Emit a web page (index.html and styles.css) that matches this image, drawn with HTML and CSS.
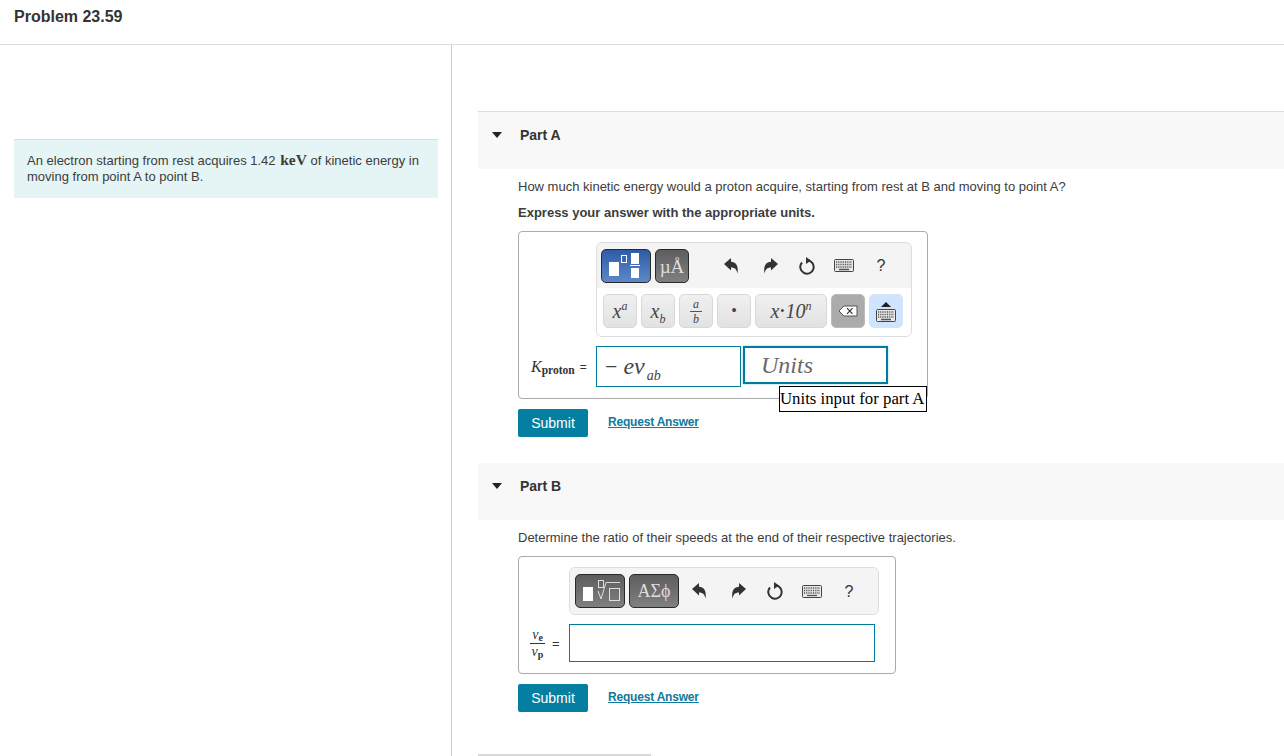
FILE: index.html
```html
<!DOCTYPE html>
<html lang="en">
<head>
<meta charset="utf-8">
<title>Problem 23.59</title>
<link rel="stylesheet" href="styles.css">
</head>
<body>
<svg class="defs" width="0" height="0" aria-hidden="true">
  <symbol id="undo" viewBox="0 0 15 16"><path d="M0 6 7 0V3.8C11.5 3.8 14.6 7 13.6 15.5 12.6 11.4 11 9.4 7 9.4V12.6Z"/></symbol>
  <symbol id="redo" viewBox="0 0 15 16"><path d="M15 6 8 0V3.8C3.5 3.8.4 7 1.4 15.5 2.4 11.4 4 9.4 8 9.4V12.6Z"/></symbol>
  <symbol id="reset" viewBox="0 0 16 18"><path d="M3 5.5A6.7 6.7 0 1 0 8 3.3" fill="none" stroke="#333" stroke-width="2"/><path d="M7 0 12 3.6 7 7Z" fill="#333"/></symbol>
  <symbol id="kbd" viewBox="0 0 20 13"><rect x=".5" y=".5" width="19" height="12" rx="1" fill="#e8e8e8" stroke="#444"/><path d="M2 3h16M2 5.5h16M2 8h16" stroke="#555" stroke-width="1.3" stroke-dasharray="1 .8"/><path d="M5 10.5h10" stroke="#555" stroke-width="1.3"/></symbol>
</svg>

<header class="topbar"><h1 class="title">Problem 23.59</h1></header>

<main class="panes">
  <aside class="left">
    <p class="intro">An electron starting from rest acquires 1.42 <span class="unit-math">keV</span> of kinetic energy in<br>moving from point A to point B.</p>
  </aside>

  <section class="right">
    <div class="part part-a">
      <div class="part-head"><span class="caret"></span><h2>Part A</h2></div>
      <div class="part-body">
        <p class="question">How much kinetic energy would a proton acquire, starting from rest at B and moving to point A?</p>
        <p class="instruction">Express your answer with the appropriate units.</p>
        <div class="answer answer-a">
          <div class="toolbar toolbar-a">
            <div class="tb-top">
              <span class="tpl tpl-blue">
                <svg width="48" height="32" viewBox="0 0 48 32"><rect x="7" y="12" width="10" height="14" fill="#fff"/><rect x="19.5" y="5.5" width="5" height="7" fill="none" stroke="#fff"/><rect x="29" y="3" width="8" height="11" fill="#fff"/><rect x="28" y="15" width="10" height="1" fill="#fff"/><rect x="29" y="18" width="8" height="10" fill="#fff"/></svg>
              </span>
              <span class="tpl tpl-units">µÅ</span>
              <span class="tools tools-a">
                <span class="cell c1"><svg class="ic"><use href="#undo"/></svg></span>
                <span class="cell c2"><svg class="ic"><use href="#redo"/></svg></span>
                <span class="cell c3"><svg class="ic-r"><use href="#reset"/></svg></span>
                <span class="cell c4"><svg class="ic-k"><use href="#kbd"/></svg></span>
                <span class="cell c5 help">?</span>
              </span>
            </div>
            <div class="tb-bottom">
              <span class="key"><i>x<sup>a</sup></i></span>
              <span class="key"><i>x<sub>b</sub></i></span>
              <span class="key key-frac"><i class="f-n">a</i><i class="f-d">b</i></span>
              <span class="key key-dot">•</span>
              <span class="key key-wide"><i>x</i><span class="mid">•</span><i>10<sup>n</sup></i></span>
              <span class="key key-del">
                <svg width="20" height="12" viewBox="0 0 20 12"><path d="M1 6 6 1H19V11H6Z" fill="#fff" stroke="#555"/><path d="M9 3.2 14.5 8.8M14.5 3.2 9 8.8" stroke="#333" stroke-width="1.2"/></svg>
              </span>
              <span class="key key-kb">
                <svg width="20" height="8" viewBox="0 0 20 8"><path d="M10 1 15 6H5Z" fill="#222"/></svg>
                <svg class="ic-k"><use href="#kbd"/></svg>
              </span>
            </div>
          </div>
          <div class="input-row">
            <span class="label"><i>K</i><b class="lsub">proton</b> <span class="eq">=</span></span>
            <span class="field field-val"><span class="minus">−</span><i class="ev">ev</i><i class="ab">ab</i></span>
            <span class="field field-units">Units</span>
          </div>
          <span class="tooltip">Units input for part A</span>
        </div>
        <div class="actions">
          <span class="submit">Submit</span>
          <a class="request" href="#">Request Answer</a>
        </div>
      </div>
    </div>

    <div class="part part-b">
      <div class="part-head"><span class="caret"></span><h2>Part B</h2></div>
      <div class="part-body">
        <p class="question">Determine the ratio of their speeds at the end of their respective trajectories.</p>
        <div class="answer answer-b">
          <div class="toolbar toolbar-b">
            <span class="tpl tpl-root">
              <svg width="48" height="32" viewBox="0 0 48 32"><rect x="7" y="12" width="10" height="14" fill="#fff"/><rect x="22.5" y="5.5" width="5" height="7" fill="none" stroke="#ddd"/><path d="M22 16 25 24 30 7.5H44" fill="none" stroke="#ddd"/><rect x="33.5" y="13.5" width="10" height="12" fill="none" stroke="#ddd"/></svg>
            </span>
            <span class="tpl tpl-greek">ΑΣϕ</span>
            <span class="tools tools-b">
              <span class="cell c1"><svg class="ic"><use href="#undo"/></svg></span>
              <span class="cell c2"><svg class="ic"><use href="#redo"/></svg></span>
              <span class="cell c3"><svg class="ic-r"><use href="#reset"/></svg></span>
              <span class="cell c4"><svg class="ic-k"><use href="#kbd"/></svg></span>
              <span class="cell c5 help">?</span>
            </span>
          </div>
          <div class="input-row input-row-b">
            <span class="label label-frac">
              <span class="frac"><span class="frac-n"><i>v</i><small>e</small></span><span class="frac-d"><i>v</i><small>p</small></span></span>
              <span class="eq">=</span>
            </span>
            <span class="field field-ratio"></span>
          </div>
        </div>
        <div class="actions">
          <span class="submit">Submit</span>
          <a class="request" href="#">Request Answer</a>
        </div>
      </div>
    </div>
    <div class="next-bar"></div>
  </section>
</main>
</body>
</html>
```
FILE: styles.css
```css
* { box-sizing: border-box; }
html, body { margin: 0; padding: 0; height: 100%; overflow: hidden; }
body { width: 1284px; height: 756px; background: #fff; color: #333; font-family: "Liberation Sans", Arial, sans-serif; font-size: 13px; }
.defs { position: absolute; }
p, h1, h2 { margin: 0; }

.topbar { height: 45px; border-bottom: 1px solid #ddd; padding: 8px 14px 0; }
.title { font-size: 16px; line-height: 18px; font-weight: 700; color: #333; }

.panes { display: flex; height: 711px; }
.left { width: 452px; flex: none; border-right: 1px solid #c8ccd4; padding: 94px 13px 0 14px; }
.intro { background: #e5f5f6; border-top: 1px solid #ddd; height: 59px; padding: 13px 13px 0; line-height: 16px; font-size: 13px; color: #3c3c3c; }
.unit-math { font-family: "Liberation Serif", serif; font-weight: 700; font-size: 15.5px; line-height: 14px; margin-left: 1px; }

.right { flex: 1; padding: 66px 0 0 26px; position: relative; }
.part-head { display: flex; align-items: center; background: #f8f8f8; padding: 0 0 12px 14px; }
.part-a .part-head { height: 58px; border-top: 1px solid #ddd; }
.part-b .part-head { height: 57px; margin-top: 26px; }
.caret { width: 0; height: 0; border-left: 5.5px solid transparent; border-right: 5.5px solid transparent; border-top: 6px solid #222; margin-right: 18px; }
.part-head h2 { font-size: 14px; font-weight: 700; color: #333; }
.part-body { padding-left: 40px; }
.question { font-size: 13px; line-height: 16px; color: #3c3c3c; }
.part-a .question { margin-top: 10px; }
.part-b .question { margin-top: 10px; }
.instruction { font-size: 13px; font-weight: 700; line-height: 16px; margin-top: 10px; color: #3c3c3c; }

.answer { position: relative; border: 1px solid #aaa; border-radius: 4px; }
.answer-a { width: 410px; height: 168px; margin-top: 10px; padding: 10px 0 0 77px; }
.answer-b { width: 378px; height: 118px; margin-top: 10px; padding: 10px 0 0 50px; }

.toolbar { border: 1px solid #ddd; border-radius: 6px; background: #f4f4f4; }
.toolbar-a { width: 316px; height: 95px; overflow: hidden; }
.toolbar-b { width: 310px; height: 48px; display: flex; align-items: center; padding: 0 0 0 5px; gap: 4px; }
.tb-top { display: flex; align-items: center; gap: 4px; height: 45px; padding: 0 0 0 4px; }
.tb-bottom { display: flex; gap: 4px; height: 48px; background: #fff; padding: 6px 0 0 6px; }

.tpl { display: flex; align-items: center; justify-content: center; flex: none; height: 34px; border: 1px solid #2a2a2a; border-radius: 5px; color: #ddd; font-family: "Liberation Serif", serif; font-size: 19px; }
.tpl-blue { width: 50px; background: linear-gradient(#2f5ba6, #5d88c8); }
.tpl-units { width: 34px; padding-top: 2px; background: linear-gradient(#5d5d5d, #808080); }
.tpl-root, .tpl-greek { width: 50px; background: linear-gradient(#5d5d5d, #808080); }
.tpl-greek { font-size: 18px; }

.tools { display: flex; align-items: center; color: #333; }
.tools-a { margin-left: 19px; }
.tools-b { margin-left: -3px; }
.cell { display: flex; justify-content: center; align-items: center; }
.c1, .c2 { width: 39px; }
.c3 { width: 33px; }
.c4 { width: 41px; }
.c5 { width: 33px; }
.ic { width: 15px; height: 16px; fill: #333; }
.ic-r { width: 16px; height: 18px; }
.ic-k { width: 20px; height: 13px; display: block; }
.help { font-size: 16px; color: #333; padding: 1px 0 0 1px; }

.key { display: flex; align-items: center; justify-content: center; flex: none; width: 34px; height: 34px; border: 1px solid #d8d8d8; border-radius: 5px; background: linear-gradient(#f0f0f0, #e2e2e2); font-family: "Liberation Serif", serif; font-size: 20px; color: #444; line-height: 1; }
.key sup, .key sub { font-size: 12px; line-height: 0; }
.key-frac { flex-direction: column; font-size: 12px; }
.f-n { border-bottom: 1px solid #555; width: 12px; text-align: center; padding-bottom: 1px; }
.f-d { padding-top: 1px; }
.key-dot { font-size: 16px; }
.key-wide { width: 72px; font-size: 20px; }
.mid { font-size: 12px; margin: 0 1px; }
.key-del { background: #ababab; border-color: #bbb; }
.key-kb { flex-direction: column; gap: 0; background: #cfe5ff; border-color: #d5e3f3; }

.input-row { display: flex; align-items: flex-start; margin-top: 9px; margin-left: -65px; }
.label { width: 65px; height: 41px; display: flex; align-items: center; font-family: "Liberation Serif", serif; font-size: 16px; white-space: nowrap; color: #333; }
.lsub { font-size: 11.5px; position: relative; top: 3px; margin-right: 5px; }
.eq { font-family: "Liberation Sans", sans-serif; font-size: 12px; }
.field { display: block; border: 1px solid #007c9e; background: #fff; }
.field-val { width: 145px; height: 41px; font-family: "Liberation Serif", serif; display: flex; align-items: center; padding-left: 8px; color: #444; }
.minus { font-size: 22px; margin-right: 6px; }
.ev { font-size: 24px; }
.ab { font-size: 14px; position: relative; top: 9px; margin-left: 2px; }
.field-units { width: 145px; height: 38px; margin-left: 2px; border-width: 2px; box-shadow: 0 0 2px #8ec9da; font-family: "Liberation Serif", serif; font-style: italic; font-size: 24px; line-height: 34px; padding-left: 16px; color: #6a6a6a; }
.tooltip { position: absolute; left: 260px; top: 154px; width: 148px; height: 26px; border: 1px solid #000; background: #fff; color: #000; font-family: "Liberation Serif", serif; font-size: 16.8px; line-height: 24px; white-space: nowrap; padding-left: 0; overflow: hidden; }

.input-row-b { margin-top: 9px; margin-left: -39px; align-items: center; }
.label-frac { width: 39px; height: 38px; gap: 7px; align-items: center; font-size: 14px; }
.frac { display: flex; flex-direction: column; align-items: center; width: 15px; margin-left: 0; line-height: 14px; }
.frac-n { border-bottom: 1px solid #333; width: 100%; text-align: center; padding-bottom: 1px; }
.frac-d { padding-top: 1px; }
.frac small { font-size: 10px; font-weight: 700; position: relative; top: 2px; line-height: 0; }
.label-frac .eq { font-size: 13px; }
.field-ratio { width: 306px; height: 38px; }

.actions { display: flex; align-items: center; gap: 20px; }
.part-a .actions { margin-top: 10px; }
.part-b .actions { margin-top: 10px; }
.submit { display: block; width: 70px; height: 28px; background: #047fa1; border-radius: 2px; color: #fff; text-align: center; font-size: 14px; line-height: 28px; }
.request { color: #0f7a9c; font-weight: 700; font-size: 12px; letter-spacing: -.2px; position: relative; top: -1px; }

.next-bar { position: absolute; left: 26px; top: 709px; width: 173px; height: 2px; background: #d8d8d8; }
```
